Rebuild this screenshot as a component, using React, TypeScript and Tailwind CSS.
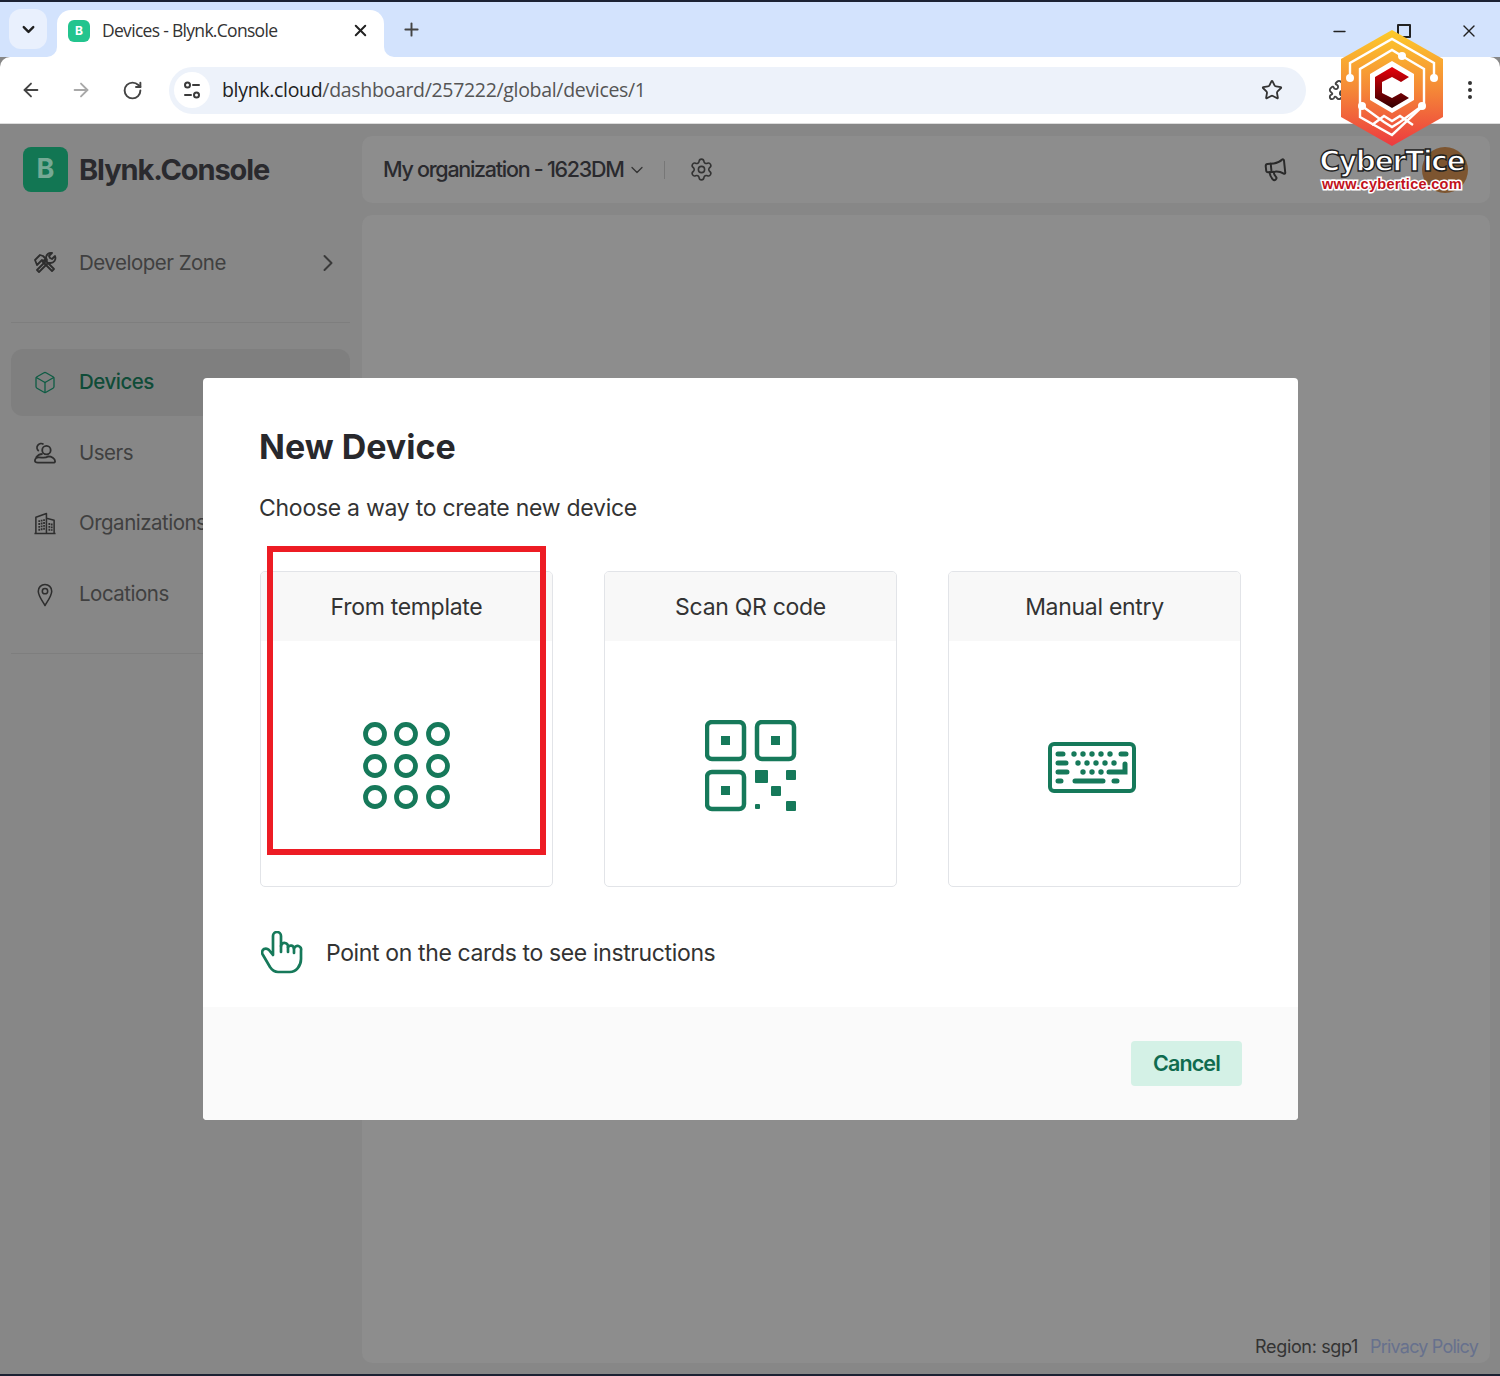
import React from "react";
import { ArrowLeft, ArrowRight, RotateCw, Star, Puzzle, X, Plus, ChevronDown, ChevronRight, Minus, Box, Settings, Megaphone } from "lucide-react";

function Tune() {
  return (
    <svg width="20" height="20" viewBox="0 0 20 20" fill="none" stroke="#3a3a3a" strokeWidth="2">
      <circle cx="5.5" cy="5" r="2.5" /><path d="M11 5h6" strokeLinecap="round" />
      <circle cx="14.5" cy="15" r="2.5" /><path d="M3 15h6" strokeLinecap="round" />
    </svg>
  );
}

function Tools() {
  return (
    <svg width="24" height="24" viewBox="0 0 24 24" fill="none" stroke="#2e2e2e" strokeWidth="1.8" strokeLinejoin="round">
      <path d="M2 9l5-5 3 1 3 3-2 2-2-1-5 5z" />
      <path d="M9 10l10 10 2-2L11 8" />
      <path d="M22 5l-3 3-2-1-1-2 3-3a5 5 0 0 0-6 5l1 2L4 19l2 2 9-9 2 0a5 5 0 0 0 5-7z" />
    </svg>
  );
}

function UsersIcon() {
  return (
    <svg width="25" height="25" viewBox="0 0 25 25" fill="none" stroke="#2e2e2e" strokeWidth="1.9" strokeLinejoin="round">
      <circle cx="14" cy="9" r="4.4" />
      <path d="M6 10a4.200 4.200 0 0 1 5-7" />
      <path d="M3 17c2-3 5-4 7-4" />
      <path d="M2 20c0-2 2-3.500 4-3.500 4 0 6 1.500 10-1 3 0 7 2 7 5 0 1-1 1.500-2 1.500H5c-2 0-3-1-3-2z" />
    </svg>
  );
}

function Building() {
  return (
    <svg width="25" height="25" viewBox="0 0 25 25" fill="none" stroke="#2e2e2e" strokeWidth="1.6" strokeLinejoin="round">
      <path d="M3 23V6l11-4v21M14 7l8 2v14M1.500 23h22" />
      <path d="M6.500 9v11M9 8.500V20M11.500 8v12M17 12v8M19.500 12.500V20" strokeWidth="1.800" strokeDasharray="2 1" />
    </svg>
  );
}

function Pin() {
  return (
    <svg width="25" height="25" viewBox="0 0 25 25" fill="none" stroke="#2e2e2e" strokeWidth="1.6" strokeLinejoin="round">
      <path d="M12.500 24c-1.500-3-7-10-7-15a7 7 0 0 1 14 0c0 5-5.500 12-7 15z" />
      <circle cx="12.500" cy="9" r="2.800" />
    </svg>
  );
}

function Hand() {
  return (
    <svg width="42" height="44" viewBox="0 0 42 44" fill="none" stroke="#16795a" strokeWidth="2.700" strokeLinecap="round" strokeLinejoin="round">
      <path d="M12 24V5a4 4 0 0 1 8 0v10a3.500 3.500 0 0 1 7 1 3.300 3.300 0 0 1 6 1.500 3.200 3.200 0 0 1 7 2V28c0 7-5 13-11 13H17c-4 0-6-2-8-5L2 24c-1.500-2-1-5 1-6 2-1 4 0 5 1z" />
      <path d="M20 15v6M27 16v5M33 17.500V22" />
    </svg>
  );
}

function Grid9() {
  const xs = [375, 406, 438];
  const ys = [733, 765, 796];
  return (
    <svg width="90" height="90" viewBox="361 720 90 90" fill="none" stroke="#16795a" strokeWidth="4.800" className="mr-[2px]">
      {ys.map((y) => xs.map((x) => <circle key={`${x}-${y}`} cx={x} cy={y} r="9.500" />))}
    </svg>
  );
}

function Qr() {
  return (
    <svg width="92" height="92" viewBox="0 0 92 92" fill="#16795a">
      <g fill="none" stroke="#16795a" strokeWidth="4.500">
        <rect x="2" y="2" width="37" height="37" rx="5" />
        <rect x="52" y="2" width="37" height="37" rx="5" />
        <rect x="2" y="52" width="37" height="37" rx="5" />
      </g>
      <rect x="16" y="16" width="9" height="9" />
      <rect x="66" y="16" width="9" height="9" />
      <rect x="16" y="66" width="9" height="9" />
      <rect x="50" y="50" width="13" height="13" rx="1" />
      <rect x="81" y="50" width="10" height="10" rx="1" />
      <rect x="66" y="66" width="10" height="10" rx="1" />
      <rect x="50" y="84" width="5" height="5" rx="1" />
      <rect x="81" y="81" width="10" height="10" rx="1" />
    </svg>
  );
}

function Keyboard() {
  const dot = (x: number, y: number) => <circle key={`${x}-${y}`} cx={x} cy={y} r="2.700" />;
  return (
    <svg width="88" height="52" viewBox="0 0 88 52" fill="#16795a" className="mt-[4px] mr-[5px]">
      <rect x="2" y="2" width="84" height="47" rx="4" fill="none" stroke="#16795a" strokeWidth="4" />
      <g stroke="#16795a" strokeWidth="5" strokeLinecap="round" fill="none">
        <path d="M10 12h5M73 12h5M10 21h8M10 30h9M10 39h3M27 39h28M66 39h3M61 30h16v-8" />
      </g>
      {[26, 35, 44, 53, 62].map((x) => dot(x, 12))}
      {[30, 39, 48, 57, 66].map((x) => dot(x, 21))}
      {[35, 44, 53].map((x) => dot(x, 30))}
    </svg>
  );
}

function Logo() {
  return (
    <div className="absolute left-[1317px] top-[29px] w-[150px] h-[165px] flex flex-col items-center">
      <svg width="104" height="118" viewBox="0 0 104 118" className="shrink-0">
        <defs>
          <linearGradient id="hexg" x1="0" y1="0" x2="0" y2="1">
            <stop offset="0" stopColor="#fdcb2a" />
            <stop offset="0.5" stopColor="#f58a37" />
            <stop offset="1" stopColor="#ec3a40" />
          </linearGradient>
          <linearGradient id="cg" x1="0" y1="0" x2="0" y2="1">
            <stop offset="0" stopColor="#e8000a" />
            <stop offset="1" stopColor="#330000" />
          </linearGradient>
        </defs>
        <path d="M52 1 103 30V88L52 117 1 88V30Z" fill="url(#hexg)" />
        <g fill="none" stroke="#fff" strokeWidth="2.400">
          <path d="M10 49V34L52 10 94 34V49" />
          <path d="M20 59V40L52 21 62 27M62 27l22 13V49M84 49v27L52 106 20 88V59" />
          <path d="M22 77 44 93 52 98 60 93 82 77" />
          <path d="M32 96 44 87 52 92 60 87 73 96" />
        </g>
        <g fill="#fff">
          <circle cx="10" cy="49" r="4" /><circle cx="94" cy="49" r="4" />
          <circle cx="62" cy="27" r="4" /><circle cx="22" cy="77" r="4" /><circle cx="82" cy="77" r="4" />
        </g>
        <path d="M52 32 74 45V71L52 84 30 71V45Z" fill="#fff" />
        <path d="M52 38 69 48 61 53 52 48 42 53V64L52 69 61 64 69 69 52 79 35 69V48Z" fill="url(#cg)" />
      </svg>
      <div className="font-['DejaVu_Sans',sans-serif] font-bold text-[28px] leading-[30px] tracking-[-1.200px] text-white [-webkit-text-stroke:1.400px_#1d1d1d] whitespace-nowrap">CyberTice</div>
      <div className="font-['Liberation_Sans',sans-serif] font-bold text-[14.500px] leading-[14px] text-[#c2121c] [-webkit-text-stroke:3px_#ffffff] [paint-order:stroke] tracking-[0.3px] whitespace-nowrap">www.cybertice.com</div>
    </div>
  );
}

function NavRow({ icon, label, active }: { icon: React.ReactNode; label: string; active?: boolean }) {
  return (
    <div className={`h-[67px] mb-[3.500px] ml-[11px] w-[339px] rounded-[12px] flex items-center pl-[22px] gap-[22px] text-[20.500px] tracking-[-0.500px] ${active ? "bg-[#7f7f7f] text-[#0f4c38] font-medium" : "text-[#404040]"}`}>
      <span className="w-[24px] flex justify-center">{icon}</span>
      <span className="whitespace-nowrap">{label}</span>
    </div>
  );
}

function Card({ title, children }: { title: string; children: React.ReactNode }) {
  return (
    <div className="w-[293px] h-[316px] rounded-[5px] border border-[#e2e4e8] overflow-hidden flex flex-col">
      <div className="h-[69px] pt-[2px] bg-[#f8f8f8] flex items-center justify-center text-[23px] text-[#333] tracking-[-0.300px] shrink-0">{title}</div>
      <div className="flex-1 flex items-center justify-center pt-[5px]">{children}</div>
    </div>
  );
}

export default function App() {
  return (
    <div className="relative w-[1500px] h-[1376px] overflow-hidden flex flex-col bg-[#878787] font-['Inter',sans-serif]">
      {/* Browser tab strip */}
      <div className="h-[2px] bg-[#1c2233] shrink-0" />
      <div className="h-[55px] bg-[#d3e3fd] flex items-end pl-[9px] shrink-0 relative">
        <div className="w-[38px] h-[40px] mb-[8px] rounded-[12px] bg-[#e9f0fd] flex items-center justify-center">
          <ChevronDown size={19} strokeWidth={3} color="#1f1f1f" />
        </div>
        <div className="relative ml-[10px] w-[327px] h-[47px] bg-white rounded-t-[14px] flex items-center pl-[11px] pr-[14px] pb-[6px]">
          <div className="absolute -left-[10px] bottom-0 w-[10px] h-[10px] bg-white"><div className="w-full h-full bg-[#d3e3fd] rounded-br-[10px]" /></div>
          <div className="absolute -right-[10px] bottom-0 w-[10px] h-[10px] bg-white"><div className="w-full h-full bg-[#d3e3fd] rounded-bl-[10px]" /></div>
          <div className="w-[22px] h-[22px] rounded-[6px] bg-[#23c48e] text-white text-[12px] font-bold flex items-center justify-center">B</div>
          <span className="ml-[12px] text-[17.500px] text-[#333] font-['Open_Sans',sans-serif] tracking-[-0.700px] whitespace-nowrap">Devices - Blynk.Console</span>
          <X size={19} strokeWidth={2.500} color="#222" className="ml-auto" />
        </div>
        <Plus size={21} strokeWidth={2.200} color="#444" className="ml-[17px] mb-[17px]" />
        <div className="ml-auto flex items-center mb-[16px] pr-[21px] gap-[48px]">
          <Minus size={19} strokeWidth={1.600} color="#222" />
          <div className="w-[14px] h-[14px] border-2 border-[#222] rounded-[1px]" />
          <X size={20} strokeWidth={1.600} color="#222" />
        </div>
      </div>
      {/* Browser toolbar */}
      <div className="h-[66px] bg-white rounded-t-[10px] flex items-center pl-[20px] shrink-0 border-b border-[#dddddd] box-content">
        <ArrowLeft size={22} strokeWidth={2} color="#444" />
        <ArrowRight size={22} strokeWidth={2} color="#a8a8a8" className="ml-[28px]" />
        <RotateCw size={21} strokeWidth={2.200} color="#444" className="ml-[30px]" />
        <div className="ml-[26px] w-[1137px] h-[47px] bg-[#edf2fa] rounded-full flex items-center pl-[5px] pr-[23px]">
          <div className="w-[36px] h-[36px] rounded-full bg-white flex items-center justify-center"><Tune /></div>
          <span className="ml-[12px] text-[19.500px] tracking-[-0.320px] font-['Open_Sans',sans-serif] text-[#555] whitespace-nowrap"><span className="text-[#222]">blynk.cloud</span>/dashboard/257222/global/devices/1</span>
          <Star size={22} strokeWidth={2} color="#333" className="ml-auto" />
        </div>
        <Puzzle size={22} strokeWidth={2} color="#444" className="ml-[22px]" />
        <div className="ml-auto mr-[28px] flex flex-col gap-[3px]">
          <span className="w-[4px] h-[4px] rounded-full bg-[#333]" />
          <span className="w-[4px] h-[4px] rounded-full bg-[#333]" />
          <span className="w-[4px] h-[4px] rounded-full bg-[#333]" />
        </div>
      </div>
      {/* App */}
      <div className="flex-1 flex min-h-0 border-b-2 border-[#1c2233]">
        <aside className="w-[362px] shrink-0">
          <div className="h-[91px] flex items-center pl-[23px]">
            <div className="w-[45px] h-[45px] rounded-[8px] bg-[#127653] text-[#76a995] text-[27px] font-bold flex items-center justify-center">B</div>
            <span className="ml-[11px] text-[29px] font-bold text-[#2a2a2e] tracking-[-1.100px]">Blynk.Console</span>
          </div>
          <div className="h-[108px] ml-[11px] w-[339px] border-b border-[#7e7e7e] flex items-center pl-[22px] pb-[11px] text-[20.500px] tracking-[-0.500px] text-[#404040]">
            <span className="w-[24px] flex justify-center"><Tools /></span>
            <span className="ml-[22px]">Developer Zone</span>
            <ChevronRight size={28} strokeWidth={1.700} color="#3a3a3a" className="ml-auto mr-[8px]" />
          </div>
          <div className="h-[26px]" />
          <NavRow active label="Devices" icon={<Box size={31} strokeWidth={1.300} color="#0f5c44" />} />
          <NavRow label="Users" icon={<UsersIcon />} />
          <NavRow label="Organizations" icon={<Building />} />
          <NavRow label="Locations" icon={<Pin />} />
          <div className="mt-[25px] ml-[11px] w-[339px] border-b border-[#7e7e7e]" />
        </aside>
        <main className="flex-1 flex flex-col pt-[12px] pr-[10px] pb-[11px] gap-[12px] min-w-0">
          <div className="h-[67px] bg-[#8d8d8d] rounded-[10px] flex items-center pl-[21px] pr-[22px] shrink-0">
            <span className="text-[21.500px] font-medium tracking-[-1.280px] text-[#2a2a2e] whitespace-nowrap">My organization - 1623DM</span>
            <ChevronDown size={20} strokeWidth={1.500} color="#333" className="ml-[3px]" />
            <span className="w-px h-[18px] bg-[#777] ml-[17px]" />
            <Settings size={25} strokeWidth={1.500} color="#333" className="ml-[24px]" />
            <Megaphone size={25} strokeWidth={1.900} color="#2a2a2a" className="ml-auto -rotate-6" />
            <div className="ml-[134px] w-[46px] h-[46px] rounded-full bg-[#7d5530]" />
          </div>
          <div className="flex-1 bg-[#8d8d8d] rounded-[10px] flex items-end justify-end pr-[12px] pb-[3px] text-[18px]">
            <span className="text-[#333] mr-[12px] tracking-[-0.350px]">Region: sgp1</span>
            <span className="text-[#67718d] tracking-[-0.800px]">Privacy Policy</span>
          </div>
        </main>
      </div>

      {/* Modal */}
      <div className="absolute left-[203px] top-[378px] w-[1095px] h-[742px] bg-white rounded-[4px] flex flex-col overflow-hidden">
        <div className="flex-1 px-[56px] pt-[47px] min-h-0">
          <h1 className="text-[34px] leading-[44px] font-bold text-[#28282c]">New Device</h1>
          <p className="mt-[23px] text-[23px] leading-[32px] text-[#333] tracking-[-0.270px]">Choose a way to create new device</p>
          <div className="mt-[47px] ml-px flex gap-[51px]">
            <Card title="From template"><Grid9 /></Card>
            <Card title="Scan QR code"><Qr /></Card>
            <Card title="Manual entry"><Keyboard /></Card>
          </div>
          <div className="mt-[42px] flex items-center h-[48px]">
            <span className="ml-[2px]"><Hand /></span>
            <span className="ml-[23px] text-[23px] text-[#333] tracking-[-0.370px]">Point on the cards to see instructions</span>
          </div>
        </div>
        <div className="h-[113px] bg-[#fafafa] flex items-center justify-end pr-[56px] shrink-0">
          <div className="w-[111px] h-[45px] rounded-[4px] bg-[#d4f1e6] text-[#0f6b4f] text-[21.500px] font-semibold tracking-[-0.900px] flex items-center justify-center">Cancel</div>
        </div>
      </div>

      {/* Red annotation */}
      <div className="absolute left-[267px] top-[546px] w-[279px] h-[309px] border-[6px] border-[#ed1c24]" />
      <Logo />
    </div>
  );
}
